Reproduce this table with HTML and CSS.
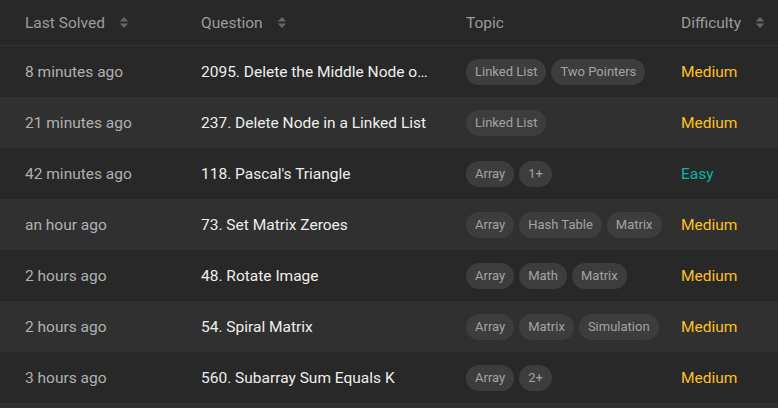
FILE: index.html
```html
<!DOCTYPE html>
<html>
<head>
<meta charset="utf-8">
<link rel="stylesheet" href="styles.css">
</head>
<body>
<div class="table">
  <div class="row head">
    <div class="cell">Last Solved <svg class="sort" viewBox="0 0 10 14"><path d="M5 1L9.5 6H0.5Z"/><path d="M5 13L9.5 8H0.5Z"/></svg></div>
    <div class="cell">Question <svg class="sort" viewBox="0 0 10 14"><path d="M5 1L9.5 6H0.5Z"/><path d="M5 13L9.5 8H0.5Z"/></svg></div>
    <div class="cell">Topic</div>
    <div class="cell">Difficulty <svg class="sort" viewBox="0 0 10 14"><path d="M5 1L9.5 6H0.5Z"/><path d="M5 13L9.5 8H0.5Z"/></svg></div>
  </div>
  <div class="row">
    <div class="cell time">8 minutes ago</div>
    <div class="cell q"><span>2095. Delete the Middle Node of a Linked List</span></div>
    <div class="cell tags"><span class="tag">Linked List</span><span class="tag">Two Pointers</span></div>
    <div class="cell med">Medium</div>
  </div>
  <div class="row alt">
    <div class="cell time">21 minutes ago</div>
    <div class="cell q"><span>237. Delete Node in a Linked List</span></div>
    <div class="cell tags"><span class="tag">Linked List</span></div>
    <div class="cell med">Medium</div>
  </div>
  <div class="row">
    <div class="cell time">42 minutes ago</div>
    <div class="cell q"><span>118. Pascal's Triangle</span></div>
    <div class="cell tags"><span class="tag">Array</span><span class="tag">1+</span></div>
    <div class="cell easy">Easy</div>
  </div>
  <div class="row alt">
    <div class="cell time">an hour ago</div>
    <div class="cell q"><span>73. Set Matrix Zeroes</span></div>
    <div class="cell tags"><span class="tag">Array</span><span class="tag">Hash Table</span><span class="tag">Matrix</span></div>
    <div class="cell med">Medium</div>
  </div>
  <div class="row">
    <div class="cell time">2 hours ago</div>
    <div class="cell q"><span>48. Rotate Image</span></div>
    <div class="cell tags"><span class="tag">Array</span><span class="tag">Math</span><span class="tag">Matrix</span></div>
    <div class="cell med">Medium</div>
  </div>
  <div class="row alt">
    <div class="cell time">2 hours ago</div>
    <div class="cell q"><span>54. Spiral Matrix</span></div>
    <div class="cell tags"><span class="tag">Array</span><span class="tag">Matrix</span><span class="tag">Simulation</span></div>
    <div class="cell med">Medium</div>
  </div>
  <div class="row">
    <div class="cell time">3 hours ago</div>
    <div class="cell q"><span>560. Subarray Sum Equals K</span></div>
    <div class="cell tags"><span class="tag">Array</span><span class="tag">2+</span></div>
    <div class="cell med">Medium</div>
  </div>
  <div class="row alt end"></div>
</div>
</body>
</html>
```
FILE: styles.css
```css
html, body {
  margin: 0;
  padding: 0;
  background: #282828;
  font-family: Roboto, "Liberation Sans", sans-serif;
  font-size: 15.5px;
  height: 408px;
  overflow: hidden;
}
.table {
  display: flex;
  flex-direction: column;
}
.row {
  display: grid;
  grid-template-columns: 176px 265px 215px 1fr;
  height: 51px;
  flex: none;
  align-items: center;
  background: #282828;
}
.row.alt {
  background: #303030;
}
.row.end {
  height: 5px;
}
.row.head {
  height: 46px;
  border-bottom: 1px solid #343434;
  box-sizing: border-box;
  color: #9c9c9c;
}
.row.head .cell {
  display: flex;
  align-items: center;
}
.cell {
  padding-left: 25px;
  padding-right: 12px;
  white-space: nowrap;
  overflow: hidden;
  min-width: 0;
}
.sort {
  width: 10px;
  height: 13px;
  margin-left: 14px;
  fill: #666666;
}
.time {
  color: #b0b0b0;
}
.q span {
  display: block;
  color: #eeeeee;
  overflow: hidden;
  text-overflow: ellipsis;
}
.q {
  padding-right: 13px;
}
.tags {
  display: flex;
  gap: 5px;
  padding-right: 0;
  overflow: visible;
}
.tag {
  background: #3d3d3d;
  color: #a3a3a3;
  font-size: 13px;
  height: 26px;
  line-height: 26px;
  padding: 0 9px;
  border-radius: 13px;
  margin-top: 1px;
}
.med {
  color: #ffc01e;
}
.easy {
  color: #00b8a3;
}
```
